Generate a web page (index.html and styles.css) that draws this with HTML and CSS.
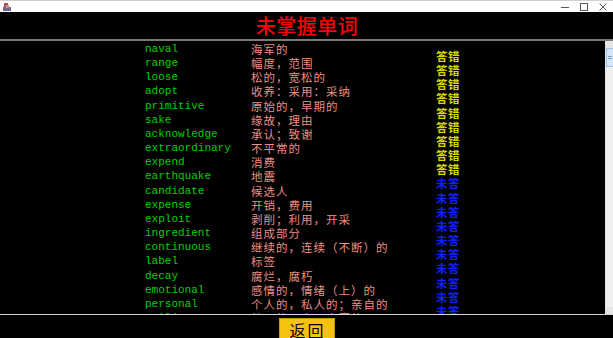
FILE: index.html
```html
<!DOCTYPE html>
<html lang="zh">
<head>
<meta charset="utf-8">
<title>未掌握单词</title>
<link rel="stylesheet" href="styles.css">
</head>
<body>
<div class="window">
  <div class="titlebar">
    <svg class="app-icon" width="8" height="8" viewBox="0 0 8 8"><rect x="1" y="0" width="4" height="4" fill="#b05050"/><rect x="0" y="4" width="8" height="4" fill="#6a6a8a"/><rect x="3" y="2" width="3" height="3" fill="#d09090"/></svg>
    <div class="controls">
      <svg width="8" height="8" viewBox="0 0 8 8"><line x1="0" y1="4.5" x2="8" y2="4.5" stroke="#555" stroke-width="1"/></svg>
      <svg width="8" height="8" viewBox="0 0 8 8"><rect x="0.5" y="0.5" width="7" height="7" fill="none" stroke="#555" stroke-width="1"/></svg>
      <svg width="8" height="8" viewBox="0 0 8 8"><path d="M0.5 0.5 L7.5 7.5 M7.5 0.5 L0.5 7.5" stroke="#555" stroke-width="1"/></svg>
    </div>
  </div>
  <div class="header"><h1 class="title">未掌握单词</h1></div>
  <div class="sep"></div>
  <div class="body">
    <div class="list">
      <div class="col col-en">
        <div>naval</div><div>range</div><div>loose</div><div>adopt</div><div>primitive</div><div>sake</div><div>acknowledge</div><div>extraordinary</div><div>expend</div><div>earthquake</div><div>candidate</div><div>expense</div><div>exploit</div><div>ingredient</div><div>continuous</div><div>label</div><div>decay</div><div>emotional</div><div>personal</div><div>utility</div>
      </div>
      <div class="col col-zh">
        <div>海军的</div><div>幅度，范围</div><div>松的，宽松的</div><div>收养：采用：采纳</div><div>原始的，早期的</div><div>缘故，理由</div><div>承认；致谢</div><div>不平常的</div><div>消费</div><div>地震</div><div>候选人</div><div>开销，费用</div><div>剥削；利用，开采</div><div>组成部分</div><div>继续的，连续（不断）的</div><div>标签</div><div>腐烂，腐朽</div><div>感情的，情绪（上）的</div><div>个人的，私人的；亲自的</div><div>效用的，实用实惠的</div>
      </div>
      <div class="col col-st">
        <div class="wrong">答错</div><div class="wrong">答错</div><div class="wrong">答错</div><div class="wrong">答错</div><div class="wrong">答错</div><div class="wrong">答错</div><div class="wrong">答错</div><div class="wrong">答错</div><div class="wrong">答错</div>
        <div class="none">未答</div><div class="none">未答</div><div class="none">未答</div><div class="none">未答</div><div class="none">未答</div><div class="none">未答</div><div class="none">未答</div><div class="none">未答</div><div class="none">未答</div><div class="none">未答</div>
      </div>
    </div>
    <div class="scrollbar">
      <div class="arrow"></div>
      <div class="thumb"><span class="grip"></span></div>
      <div class="track"></div>
      <div class="arrow"></div>
    </div>
  </div>
  <div class="footer">
    <button class="back">返回</button>
  </div>
</div>
</body>
</html>
```
FILE: styles.css
```css
html, body {
  margin: 0;
  padding: 0;
  background: #000;
}
.window {
  width: 613px;
  height: 338px;
  overflow: hidden;
  display: flex;
  flex-direction: column;
  background: #000;
}
.titlebar {
  height: 12px;
  flex: none;
  background: #fff;
  border-top: 1px solid #cfcfcf;
  box-sizing: border-box;
  display: flex;
  align-items: center;
  justify-content: space-between;
  padding: 0 6px 0 3px;
}
.app-icon { display: block; }
.controls {
  display: flex;
  gap: 11px;
  align-items: center;
}
.controls svg { display: block; }
.header {
  height: 27px;
  flex: none;
  display: flex;
  align-items: center;
  justify-content: center;
}
.title {
  margin: 0;
  padding-left: 1px;
  font-family: "Noto Sans CJK SC", sans-serif;
  font-size: 20px;
  font-weight: 500;
  line-height: 27px;
  color: #ff0000;
  letter-spacing: 0.5px;
}
.sep {
  height: 2px;
  flex: none;
  background: #7a7a7a;
}
.body {
  height: 273px;
  flex: none;
  display: flex;
  border-bottom: 1px solid #d8d8d8;
}
.list {
  flex: 1;
  display: flex;
  overflow: hidden;
  padding-top: 1px;
}
.col > div {
  height: 14.17px;
  line-height: 14.17px;
  white-space: nowrap;
  overflow: hidden;
}
.col-en {
  margin-left: 145px;
  width: 106px;
  font-family: "Liberation Mono", monospace;
  font-size: 11px;
  color: #00d000;
}
.col-zh {
  width: 185px;
  font-family: "Noto Sans CJK SC", sans-serif;
  font-size: 11.5px;
  color: #ee8e86;
  letter-spacing: 1px;
}
.col-st {
  padding-top: 7px;
  font-family: "Noto Sans CJK SC", sans-serif;
  font-size: 11.5px;
  font-weight: 700;
  letter-spacing: 0.5px;
}
.wrong { color: #d8d800; }
.none { color: #1020ff; }
.scrollbar {
  width: 7px;
  flex: none;
  display: flex;
  flex-direction: column;
  background: #f0f0f0;
  border-left: 1px solid #e4e4e4;
}
.arrow {
  height: 7px;
  flex: none;
  background: #e6e6e6;
}
.thumb {
  height: 19px;
  flex: none;
  background: #d6e8f8;
  border: 1px solid #9cc2e6;
  border-right: none;
  box-sizing: border-box;
  display: flex;
  align-items: center;
  justify-content: center;
}
.grip {
  display: block;
  width: 4px;
  height: 3px;
  border-top: 1px solid #7d9fc4;
  border-bottom: 1px solid #7d9fc4;
  box-sizing: border-box;
}
.track { flex: 1; }
.footer {
  flex: 1;
  display: flex;
  justify-content: center;
  padding-top: 3px;
}
.back {
  width: 56px;
  height: 24px;
  padding: 0;
  margin: 0;
  background: #f5c211;
  border: 1px solid #c99a00;
  font-family: "Noto Sans CJK SC", sans-serif;
  font-size: 16px;
  line-height: 20px;
  color: #000;
  letter-spacing: 2px;
  text-indent: 2px;
  display: block;
}
```
